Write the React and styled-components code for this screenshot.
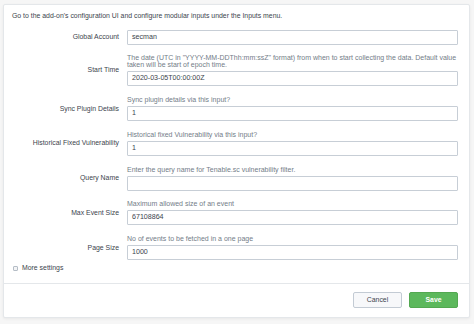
import React from "react";
import styled, { createGlobalStyle } from "styled-components";

const GlobalStyle = createGlobalStyle`
  *, *:before, *:after {
    box-sizing: border-box;
  }
  body {
    margin: 0;
    background: #f6f6f6;
    font-family: "Liberation Sans", Arial, sans-serif;
    color: #3c444d;
  }
`;

const fields = [
  { label: "Global Account", value: "secman" },
  {
    label: "Start Time",
    help: 'The date (UTC in "YYYY-MM-DDThh:mm:ssZ" format) from when to start collecting the data. Default value taken will be start of epoch time.',
    value: "2020-03-05T00:00:00Z",
  },
  { label: "Sync Plugin Details", help: "Sync plugin details via this input?", value: "1" },
  { label: "Historical Fixed Vulnerability", help: "Historical fixed Vulnerability via this input?", value: "1" },
  { label: "Query Name", help: "Enter the query name for Tenable.sc vulnerability filter.", value: "" },
  { label: "Max Event Size", help: "Maximum allowed size of an event", value: "67108864" },
  { label: "Page Size", help: "No of events to be fetched in a one page", value: "1000" },
];

const App = () => {
  return (
    <Page>
      <GlobalStyle />
      <Card>
        <Body>
          <Intro>Go to the add-on's configuration UI and configure modular inputs under the Inputs menu.</Intro>
          <Form>
            {fields.map((f) => (
              <Row key={f.label}>
                <Label>{f.label}</Label>
                <Control>
                  {f.help && <Help>{f.help}</Help>}
                  <Input>{f.value}</Input>
                </Control>
              </Row>
            ))}
          </Form>
          <More>
            <Check />
            More settings
          </More>
        </Body>
        <Footer>
          <Button>Cancel</Button>
          <Button primary>Save</Button>
        </Footer>
      </Card>
    </Page>
  );
};

const Page = styled.div`
  padding: 4px 4px 5px 3px;
`;

const Card = styled.div`
  background: white;
  border: 1px solid #e4e7ea;
  border-radius: 2px;
  box-shadow: 0 1px 3px rgba(0, 0, 0, 0.06);
`;

const Body = styled.div`
  padding: 6.5px 11px 0 8px;
`;

const Intro = styled.div`
  font-size: 6.9px;
  line-height: 8px;
  margin-bottom: 10px;
  color: #3c444d;
`;

const Form = styled.div`
  display: flex;
  flex-direction: column;
  gap: 9.8px;
`;

const Row = styled.div`
  display: grid;
  grid-template-columns: 107px 1fr;
  column-gap: 8px;
  align-items: center;
`;

const Label = styled.div`
  text-align: right;
  font-size: 6.9px;
  line-height: 8px;
  color: #3c444d;
`;

const Control = styled.div`
  display: flex;
  flex-direction: column;
`;

const Help = styled.div`
  font-size: 7px;
  line-height: 7px;
  color: #737d88;
  margin-bottom: 3px;
`;

const Input = styled.div`
  height: 15px;
  border: 1px solid #c7ced6;
  border-radius: 1px;
  padding: 0 4px;
  font-size: 7.1px;
  line-height: 13px;
  color: #3c444d;
`;

const More = styled.label`
  display: flex;
  align-items: center;
  gap: 4px;
  margin-top: 4px;
  padding-left: 1px;
  font-size: 6.9px;
  line-height: 8px;
  color: #3c444d;
`;

const Check = styled.span`
  width: 5px;
  height: 5px;
  border: 1px solid #b5bdc6;
  background: #f3f4f6;
  border-radius: 1px;
`;

const Footer = styled.div`
  margin-top: 11px;
  border-top: 1px solid #e4e7ea;
  display: flex;
  justify-content: flex-end;
  gap: 7px;
  padding: 8px 11px 9px 0;
`;

const Button = styled.div`
  width: 49px;
  height: 16px;
  border-radius: 2px;
  border: 1px solid ${(p) => (p.primary ? "#53a851" : "#c3cbd4")};
  background: ${(p) => (p.primary ? "#5cb85c" : "#f7f8fa")};
  color: ${(p) => (p.primary ? "white" : "#3c444d")};
  font-size: 6.9px;
  font-weight: ${(p) => (p.primary ? 700 : 400)};
  line-height: 14px;
  text-align: center;
`;

export default App;
